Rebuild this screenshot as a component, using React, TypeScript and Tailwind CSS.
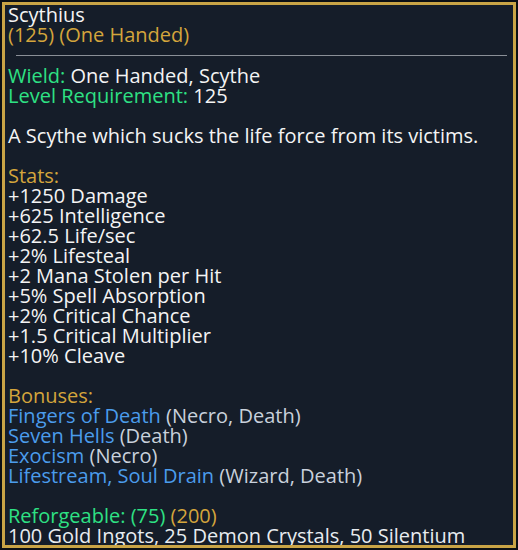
const stats = [
  "+1250 Damage",
  "+625 Intelligence",
  "+62.5 Life/sec",
  "+2% Lifesteal",
  "+2 Mana Stolen per Hit",
  "+5% Spell Absorption",
  "+2% Critical Chance",
  "+1.5 Critical Multiplier",
  "+10% Cleave",
];

const bonuses = [
  { name: "Fingers of Death", tags: "(Necro, Death)" },
  { name: "Seven Hells", tags: "(Death)" },
  { name: "Exocism", tags: "(Necro)" },
  { name: "Lifestream, Soul Drain", tags: "(Wizard, Death)" },
];

export default function App() {
  return (
    <div className="w-[518px] h-[550px] bg-[#0b0f14] p-[2px] overflow-hidden">
      <div className="h-full border-[3px] border-[#c9a446] bg-[#151d29] overflow-hidden">
        <div className="pl-[3px] pr-[6px] pt-0 text-[20px] leading-[20px] font-medium text-[#f4f4f4] font-['Open_Sans',sans-serif]">
          <div>Scythius</div>
          <div className="text-[#d4a53c]">(125) (One Handed)</div>

          <div className="h-[21px] flex items-center pl-[8px]">
            <div className="h-px w-full bg-[#8a8f97]" />
          </div>

          <div>
            <span className="text-[#2ee184]">Wield:</span> One Handed, Scythe
          </div>
          <div>
            <span className="text-[#2ee184]">Level Requirement:</span> 125
          </div>
          <div className="h-[20px]" />

          <div>A Scythe which sucks the life force from its victims.</div>
          <div className="h-[20px]" />

          <div className="text-[#d4a53c]">Stats:</div>
          {stats.map((s) => (
            <div key={s}>{s}</div>
          ))}
          <div className="h-[20px]" />

          <div className="text-[#d4a53c]">Bonuses:</div>
          {bonuses.map((b) => (
            <div key={b.name}>
              <span className="text-[#4b9cec]">{b.name}</span>{" "}
              <span className="text-[#c9d1dc]">{b.tags}</span>
            </div>
          ))}
          <div className="h-[20px]" />

          <div>
            <span className="text-[#2ee184]">Reforgeable: (75)</span>{" "}
            <span className="text-[#d4a53c]">(200)</span>
          </div>
          <div className="text-[#e8ecf0]">100 Gold Ingots, 25 Demon Crystals, 50 Silentium</div>
        </div>
      </div>
    </div>
  );
}
